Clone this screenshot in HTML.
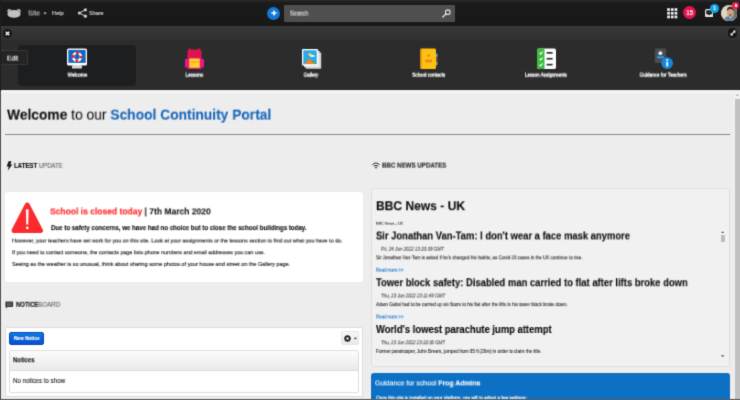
<!DOCTYPE html>
<html lang="en">
<head>
<meta charset="utf-8">
<title>School Continuity Portal</title>
<style>
*{box-sizing:border-box;margin:0;padding:0}
html,body{width:740px;height:400px;overflow:hidden;background:#ededed;font-family:"Liberation Sans",sans-serif;color:#111}
.abs{position:absolute}
.x{position:absolute;white-space:nowrap;line-height:1}
#page{position:relative;width:740px;height:400px;overflow:hidden;background:#ededed;filter:url(#softblur)}
/* top bar */
#topbar{left:0;top:0;width:740px;height:25.8px;background:linear-gradient(#2a2a2a 0,#1b1b1b 3px,#181818 100%)}
#topbar .t{color:#cfcfcf;font-size:6.6px;top:9px;line-height:8px;white-space:nowrap}
#search{left:283.6px;top:4.8px;width:171.4px;height:16.9px;background:#4f4f4f;border-radius:1.2px}
#plus{left:266.9px;top:6.5px;width:13.2px;height:13.2px;border-radius:50%;background:#1278d8}
/* second bar */
#bar2{left:0;top:25.8px;width:740px;height:14.4px;background:linear-gradient(#393939,#303030)}
#nav{left:0;top:40.2px;width:740px;height:50.3px;background:#2c2c2c}
#sel{left:18px;top:45px;width:118px;height:41px;border-radius:4px;background:#1c1e20}
.lbl{color:#fff;font-size:4.67px;font-weight:normal;-webkit-text-stroke:0.12px #fff;line-height:6px;top:72px;width:120px;text-align:center;white-space:nowrap}
#edit{left:0;top:49.5px;width:28px;height:15px;background:#242424;border:1px solid #383838;border-left:0;border-radius:0 2.5px 2.5px 0}
/* content */
#content{left:0;top:90.5px;width:734px;height:309.5px;background:linear-gradient(#f6f6f6 0,#ededed 4px,#ededed 100%)}
#leftedge{left:0;top:91px;width:1.2px;height:309px;background:#505050}
#sb{left:734px;top:91px;width:6px;height:309px;background:#f1f1f1}
#sbt{left:735.3px;top:98.7px;width:4.3px;height:302px;background:#c1c1c1}
h1{position:absolute;left:6.5px;top:106.2px;font-size:13.9px;line-height:18px;font-weight:normal;white-space:nowrap;color:#111}
h1 b{font-weight:bold}
h1 .bl{color:#1766b8;font-weight:bold}
#hr{left:5px;top:134px;width:725px;height:1px;background:#8a8a8a}
.sect{font-size:5.6px;line-height:8px;white-space:nowrap;color:#111}
.sect b{font-weight:bold}
.sect span{color:#777}

.card{background:#fff;border-radius:3px}
.t1{position:absolute;white-space:nowrap;line-height:1}
#alert{left:5px;top:192px;width:358px;height:90.4px}
#nb{left:5px;top:327px;width:357.8px;height:69.8px;border:1px solid #dcdcdc;border-radius:2px}
#newbtn{left:8.5px;top:332px;width:35.8px;height:12.6px;border-radius:2px;background:linear-gradient(#0a7be0,#0a4fd0);border:0.5px solid #0a45b8;color:#fff;font-weight:bold;font-size:4.73px;line-height:12.5px;text-align:center}
#gear{left:341.3px;top:331.4px;width:17.6px;height:13.2px;border-radius:2px;background:linear-gradient(#f7f7f7,#e9e9e9);border:1px solid #e6e6e6}
#tbl{left:9px;top:349.5px;width:350px;height:43.3px;border:1px solid #dedede;border-radius:2px;background:#fff}
#tblh{left:10px;top:350.5px;width:348px;height:20.5px;background:linear-gradient(#fcfcfc,#e9e9e9);border-bottom:1px solid #dcdcdc}
#news{left:370.5px;top:188px;width:359px;height:178.5px;background:#f1f1f1;border:1px solid #dfdfdf;border-radius:2px}
#blue{left:370.5px;top:372.5px;width:359px;height:40px;background:#0c70c4;border-radius:3px}
#bottomline{left:0;top:398.9px;width:740px;height:2px;background:#5c5c5c}
.hl{font-weight:bold;font-size:9.43px;color:#111}
.dt{font-style:italic;font-size:4.5px;color:#555}
.ds{font-size:4.5px;color:#333}
.rm{font-size:4.3px;color:#1a6fc4}
</style>
</head>
<body>
<svg width="0" height="0" style="position:absolute"><filter id="softblur" x="0" y="0" width="100%" height="100%" color-interpolation-filters="sRGB"><feConvolveMatrix order="3" kernelMatrix="0.0169 0.0962 0.0169 0.0962 0.5476 0.0962 0.0169 0.0962 0.0169" edgeMode="duplicate" preserveAlpha="true"/></filter></svg>
<div id="page">
  <div id="topbar" class="abs">
  </div>
  <div id="plus" class="abs"></div>
  <div id="search" class="abs"></div>
  <div id="bar2" class="abs"></div>

  <!-- top bar icons -->
  <svg class="abs" style="left:6px;top:7px" width="16" height="12" viewBox="0 0 16 12"><g fill="#c2c2c2"><ellipse cx="8" cy="6.9" rx="6.6" ry="3.9"/><circle cx="3.3" cy="3.9" r="2"/><circle cx="12.7" cy="3.9" r="2"/></g><circle cx="3.4" cy="3.8" r="0.6" fill="#555"/><circle cx="12.6" cy="3.8" r="0.6" fill="#555"/></svg>
  <svg class="abs" style="left:43px;top:12px" width="4" height="3" viewBox="0 0 4 3"><path d="M0.3 0.4H3.7L2 2.4Z" fill="#c8c8c8"/></svg>
  <svg class="abs" style="left:76.5px;top:7.5px" width="11" height="10" viewBox="0 0 11 10"><g stroke="#d0d0d0" stroke-width="1" fill="none"><path d="M8.3 1.8L2.4 5L8.3 8.2"/></g><g fill="#d0d0d0"><circle cx="2.4" cy="5" r="1.6"/><circle cx="8.4" cy="1.8" r="1.6"/><circle cx="8.4" cy="8.2" r="1.6"/></g></svg>
  <svg class="abs" style="left:270.5px;top:10.1px" width="6" height="6" viewBox="0 0 6 6"><path d="M3 0.4V5.6M0.4 3H5.6" stroke="#fff" stroke-width="1.5" fill="none"/></svg>
  <svg class="abs" style="left:441px;top:8px" width="11" height="11" viewBox="0 0 11 11"><circle cx="6.8" cy="4.2" r="2.3" fill="none" stroke="#e0e0e0" stroke-width="1.1"/><path d="M5 6L1.8 9" stroke="#e0e0e0" stroke-width="1.4" stroke-linecap="round"/></svg>
  <svg class="abs" style="left:666.5px;top:7.8px" width="11" height="11" viewBox="0 0 11 11"><g fill="#f2f2f2"><rect x="0.2" y="0.2" width="2.7" height="2.7"/><rect x="3.9" y="0.2" width="2.7" height="2.7"/><rect x="7.6" y="0.2" width="2.7" height="2.7"/><rect x="0.2" y="3.9" width="2.7" height="2.7"/><rect x="3.9" y="3.9" width="2.7" height="2.7"/><rect x="7.6" y="3.9" width="2.7" height="2.7"/><rect x="0.2" y="7.6" width="2.7" height="2.7"/><rect x="3.9" y="7.6" width="2.7" height="2.7"/><rect x="7.6" y="7.6" width="2.7" height="2.7"/></g></svg>
  <div class="abs" style="left:682.9px;top:5.9px;width:13.6px;height:13.6px;border-radius:50%;background:#e3134f;color:#fff;font-weight:bold;"></div>
  <svg class="abs" style="left:704.8px;top:9.1px" width="8.3" height="8.3" viewBox="0 0 9 9"><rect x="0.7" y="0.7" width="7.6" height="7.6" rx="0.8" fill="#222" stroke="#e4e4e4" stroke-width="1.3"/><path d="M0.7 5.6H3L3.6 6.6H5.4L6 5.6H8.3V8.3H0.7Z" fill="#e4e4e4"/></svg>
  <div class="abs" style="left:709.8px;top:3.5px;width:9.2px;height:9.2px;border-radius:50%;background:#15a4e6;color:#fff;font-weight:bold;"></div>
  <svg class="abs" style="left:721px;top:4.7px" width="16.4" height="16.4" viewBox="0 0 16.4 16.4"><defs><clipPath id="av"><circle cx="8.2" cy="8.2" r="7.9"/></clipPath></defs><circle cx="8.2" cy="8.2" r="8.2" fill="#cfc9bb"/><g clip-path="url(#av)"><rect width="16.4" height="16.4" fill="#cdc5ad"/><rect x="0" y="0" width="5.5" height="16.4" fill="#dcd6c4"/><rect x="12.5" y="0" width="4" height="16.4" fill="#6b705c"/><path d="M2.4 16.4Q3.4 11 9.4 10.8Q15 11 15.8 16.4Z" fill="#6a7f9b"/><path d="M8.2 11.4L9.4 13.6L10.8 11.4Z" fill="#e8e8e8"/><ellipse cx="9.4" cy="6.9" rx="3.1" ry="3.9" fill="#d3a083"/><path d="M6 6.2Q5.8 1.6 9.5 1.7Q13 1.8 12.8 6.2Q11.4 3.9 9.4 4.1Q7.2 3.9 6 6.2Z" fill="#35261f"/><path d="M7.6 8.8Q9.4 10.6 11.2 8.8Q10.8 11 9.4 11Q8 11 7.6 8.8Z" fill="#6b4a3a"/></g></svg>
  <div class="abs" style="left:732.2px;top:2.1px;width:6.6px;height:6.6px;border-radius:50%;background:#ea1f50"></div>
  <div class="abs" style="left:734.5px;top:3.6px;width:2px;height:3.4px;border-radius:1px;background:#fff"></div>
  <!-- bar2 buttons -->
  <div class="abs" style="left:2.8px;top:28.7px;width:9.4px;height:9.4px;border-radius:50%;background:#151515"></div>
  <svg class="abs" style="left:5px;top:30.9px" width="5" height="5" viewBox="0 0 5 5"><path d="M0.7 0.7L4.3 4.3M4.3 0.7L0.7 4.3" stroke="#fff" stroke-width="1.3"/></svg>
  <div class="abs" style="left:728.2px;top:28.4px;width:9.2px;height:9.2px;border-radius:50%;background:#141414"></div>
  <svg class="abs" style="left:729.8px;top:30px" width="6" height="6" viewBox="0 0 6 6"><path d="M1.2 4.8L4.8 1.2" stroke="#fff" stroke-width="1.2"/><path d="M2.8 0.6H5.4V3.2ZM0.6 2.8V5.4H3.2Z" fill="#fff"/></svg>

  <div id="nav" class="abs"></div>
  <div id="sel" class="abs"></div>

  <!-- nav icons -->
  <svg class="abs" style="left:66px;top:48px" width="22" height="22" viewBox="0 0 22 22"><rect x="6" y="17.5" width="10" height="3" rx="0.6" fill="#d6d9dc"/><rect x="7.5" y="16.5" width="7" height="2" fill="#c4c8cc"/><rect x="1" y="0.5" width="20" height="17" rx="1.6" fill="#fdfdfd"/><rect x="2.3" y="1.9" width="17.4" height="13" fill="#1565c0"/><circle cx="11" cy="8.8" r="3.95" fill="none" stroke="#fff" stroke-width="2.4"/><circle cx="11" cy="8.8" r="3.95" fill="none" stroke="#e5202a" stroke-width="2.4" stroke-dasharray="3.102 3.102" stroke-dashoffset="1.55"/></svg>
  <svg class="abs" style="left:184px;top:48px" width="21" height="22" viewBox="0 0 21 22"><rect x="4.6" y="0.3" width="2" height="3" rx="0.8" fill="#e0104f"/><rect x="14.4" y="0.3" width="2" height="3" rx="0.8" fill="#e0104f"/><path d="M3.5 3.4Q3.5 1.6 5.3 1.6H15.7Q17.5 1.6 17.5 3.4V10.5H3.5Z" fill="#dc1450"/><rect x="3.5" y="9.6" width="14" height="11.4" rx="1" fill="#f21289"/><rect x="1" y="11" width="3.5" height="8.5" rx="0.8" fill="#f21289"/><rect x="16.5" y="11" width="3.5" height="8.5" rx="0.8" fill="#f21289"/><rect x="5.2" y="10.4" width="10.6" height="9.3" rx="0.6" fill="#fdd12a"/><rect x="5.2" y="13.2" width="10.6" height="1.3" fill="#f9a61e"/></svg>
  <svg class="abs" style="left:301px;top:48px" width="21" height="22" viewBox="0 0 21 22"><rect x="4.6" y="4.4" width="15.6" height="16.4" rx="0.8" fill="#cfd3d6"/><rect x="3" y="2.8" width="15.6" height="16.4" rx="0.8" fill="#e6e8ea"/><rect x="1" y="1" width="16" height="16.6" rx="0.8" fill="#fcfcfc"/><rect x="2.3" y="2.3" width="13.4" height="13.8" fill="#29a9ea"/><circle cx="9" cy="6.6" r="1.6" fill="#fdd835"/><ellipse cx="11.5" cy="8" rx="2.3" ry="1.1" fill="#fff"/><path d="M9 16.1L12.3 12.4L15.7 15.4V16.1Z" fill="#4caf50"/><path d="M3.2 16.1L8.5 10.4L13.2 16.1Z" fill="#f6821f"/></svg>
  <svg class="abs" style="left:419px;top:48px" width="20" height="22" viewBox="0 0 20 22"><rect x="15.5" y="5.4" width="3" height="3.8" rx="0.7" fill="#26c6da"/><rect x="15.5" y="9.4" width="3" height="3.8" rx="0.7" fill="#e91e63"/><rect x="15.5" y="13.4" width="3" height="3.8" rx="0.7" fill="#7cc242"/><rect x="1.5" y="0.5" width="15.5" height="20.5" rx="1.5" fill="#fdc20f"/><rect x="1.5" y="0.5" width="1.8" height="20.5" rx="0.9" fill="#f6a019"/><circle cx="9.6" cy="7.6" r="1.4" fill="#f5821f"/><rect x="6.2" y="11.4" width="6.8" height="3" rx="0.6" fill="#f5821f"/></svg>
  <svg class="abs" style="left:536px;top:48px" width="21" height="22" viewBox="0 0 21 22"><rect x="1" y="0.5" width="19" height="20.5" rx="1.8" fill="#fdfdfd"/><path d="M2.8 0.5H8.5V21H2.8Q1 21 1 19.2V2.3Q1 0.5 2.8 0.5Z" fill="#3dbb3d"/><g stroke="#fff" stroke-width="1.1" fill="none"><path d="M3.4 4.9L4.6 6.1L6.6 3.7"/><path d="M3.4 10.8L4.6 12L6.6 9.6"/><path d="M3.4 16.7L4.6 17.9L6.6 15.5"/></g><g fill="#2f2f2f"><rect x="10.6" y="4" width="6" height="1.7"/><rect x="10.6" y="9.9" width="6" height="1.7"/><rect x="10.6" y="15.8" width="6" height="1.7"/></g></svg>
  <svg class="abs" style="left:654px;top:48px" width="20" height="22" viewBox="0 0 20 22"><rect x="0.9" y="0.5" width="11.3" height="14.5" rx="1.2" fill="#4b4d52"/><circle cx="6.4" cy="5.2" r="1.9" fill="#f0f0f0"/><rect x="3" y="8.1" width="7" height="2.3" fill="#1e9be6"/><circle cx="13.2" cy="15.1" r="5.8" fill="#1587dc"/><circle cx="13.2" cy="12" r="1" fill="#fff"/><rect x="12.3" y="13.8" width="1.8" height="4.6" fill="#fff"/></svg>
  <div id="edit" class="abs"></div>

  <div id="content" class="abs"></div>
  <div id="leftedge" class="abs"></div>
  <div id="sb" class="abs"></div>
  <div id="sbt" class="abs"></div>

  <div id="hr" class="abs"></div>

  <svg class="abs" style="left:6px;top:160.5px" width="7" height="10" viewBox="0 0 7 10"><path d="M2.6 0.3H5.6L4.3 3.5H6.4L1.6 9.8L2.7 5.4H0.6Z" fill="#1a1a1a"/></svg>
  <svg class="abs" style="left:371.7px;top:162.2px" width="8" height="6.8" viewBox="0 0 9 7.5" preserveAspectRatio="none"><g fill="none" stroke="#2a2a2a" stroke-width="1.1" stroke-linecap="round"><path d="M0.7 2.7Q4.5 -0.7 8.3 2.7"/><path d="M2.3 4.4Q4.5 2.5 6.7 4.4"/></g><circle cx="4.5" cy="6.1" r="0.95" fill="#2a2a2a"/></svg>
  <svg class="abs" style="left:5px;top:301px" width="8.5" height="8" viewBox="0 0 8.5 8"><path d="M1.2 0.4H7.3Q8.1 0.4 8.1 1.2V5.2Q8.1 6 7.3 6H2.6L0.9 7.5V6Q0.4 5.8 0.4 5.2V1.2Q0.4 0.4 1.2 0.4Z" fill="#333"/><path d="M1.8 2H6.8M1.8 3.3H6.8M1.8 4.6H6.8" stroke="#9a9a9a" stroke-width="0.5"/></svg>
  <!-- alert card -->
  <div id="alert" class="abs card"></div>
  <svg class="abs" style="left:10.3px;top:201.2px" width="35" height="33" viewBox="0 0 35 33"><path d="M17.25 3.9L30.6 29.7H3.9Z" fill="#fb2a2c" stroke="#fb2a2c" stroke-width="4.8" stroke-linejoin="round"/><path d="M15.85 8.6Q17.25 7.8 18.65 8.6L18.2 23.4H16.3Z" fill="#fff"/><circle cx="17.25" cy="26.9" r="1.35" fill="#fff"/></svg>

  <!-- noticeboard -->
  <div id="nb" class="abs card"></div>
  <div id="newbtn" class="abs"></div>
  <div id="gear" class="abs"></div>
  <svg class="abs" style="left:343.8px;top:334.6px" width="14" height="7" viewBox="0 0 14 7"><circle cx="3.5" cy="3.5" r="2.15" fill="none" stroke="#1c1c1c" stroke-width="1.7"/><g stroke="#1c1c1c" stroke-width="1.1"><path d="M3.5 0V1M3.5 6V7M0 3.5H1M6 3.5H7M1 1L1.7 1.7M5.3 5.3L6 6M1 6L1.7 5.3M5.3 1.7L6 1"/></g><path d="M10 2.8H12.8L11.4 4.4Z" fill="#1c1c1c"/></svg>
  <div id="tbl" class="abs"></div>
  <div id="tblh" class="abs"></div>

  <!-- news -->
  <div id="news" class="abs"></div>
  <div class="abs" style="left:720.6px;top:235px;width:4px;height:7px;background:#bdbdbd"></div>

  <!-- blue card -->
  <div id="blue" class="abs"></div>
  <svg class="abs" style="left:721px;top:230.5px" width="3.4" height="2.4" viewBox="0 0 3.4 2.4"><path d="M0 2.2L1.7 0.2L3.4 2.2Z" fill="#555"/></svg>
  <svg class="abs" style="left:721px;top:355px" width="3.4" height="2.4" viewBox="0 0 3.4 2.4"><path d="M0 0.2L1.7 2.2L3.4 0.2Z" fill="#555"/></svg>
  <svg class="abs" style="left:736px;top:94px" width="2.6" height="2" viewBox="0 0 3.4 2.4"><path d="M0 2.2L1.7 0.2L3.4 2.2Z" fill="#8a8a8a"/></svg>
  <div class="abs" style="left:0;top:0;width:1px;height:91px;background:#1e1e1e"></div>
  <div class="x" style="left:27.60px;top:9px;font-size:7.4px;color:#c4c4c4;transform:translateY(0.50px) scaleX(0.9647);transform-origin:0 0;will-change:transform;-webkit-text-stroke:0.12px #c4c4c4;">Site</div>
  <div class="x" style="left:52.30px;top:10px;font-size:6.2px;color:#d2d2d2;transform:translateY(0.00px) scaleX(0.9109);transform-origin:0 0;will-change:transform;-webkit-text-stroke:0.15px #d2d2d2;">Help</div>
  <div class="x" style="left:89.00px;top:10px;font-size:6.2px;color:#d2d2d2;transform:translateY(0.00px) scaleX(0.8901);transform-origin:0 0;will-change:transform;-webkit-text-stroke:0.15px #d2d2d2;">Share</div>
  <div class="x" style="left:289.80px;top:10px;font-size:6.3px;color:#e8e8e8;transform:translateY(0.60px) scaleX(0.9121);transform-origin:0 0;will-change:transform;-webkit-text-stroke:0.12px #e8e8e8;">Search</div>
  <div class="x" style="left:686.03px;top:10px;font-size:6.6px;color:#fff;transform:translateY(0.10px) scaleX(0.8987);transform-origin:50% 0;will-change:transform;"><b>15</b></div>
  <div class="x" style="left:712.74px;top:6px;font-size:5.6px;color:#fff;transform:translateY(0.10px) scaleX(1.0000);transform-origin:50% 0;will-change:transform;"><b>1</b></div>
  <div class="x" style="left:66.62px;top:72px;font-size:5.0px;color:#fff;transform:translateY(0.60px) scaleX(0.9398);transform-origin:50% 0;will-change:transform;-webkit-text-stroke:0.28px #fff;">Welcome</div>
  <div class="x" style="left:184.99px;top:72px;font-size:5.0px;color:#fff;transform:translateY(0.60px) scaleX(0.9450);transform-origin:50% 0;will-change:transform;-webkit-text-stroke:0.28px #fff;">Lessons</div>
  <div class="x" style="left:303.48px;top:72px;font-size:5.0px;color:#fff;transform:translateY(0.60px) scaleX(0.9215);transform-origin:50% 0;will-change:transform;-webkit-text-stroke:0.28px #fff;">Gallery</div>
  <div class="x" style="left:411.34px;top:72px;font-size:5.0px;color:#fff;transform:translateY(0.60px) scaleX(0.9345);transform-origin:50% 0;will-change:transform;-webkit-text-stroke:0.28px #fff;">School contacts</div>
  <div class="x" style="left:523.37px;top:72px;font-size:5.0px;color:#fff;transform:translateY(0.60px) scaleX(0.9158);transform-origin:50% 0;will-change:transform;-webkit-text-stroke:0.28px #fff;">Lesson Assignments</div>
  <div class="x" style="left:638.39px;top:72px;font-size:5.0px;color:#fff;transform:translateY(0.60px) scaleX(0.9359);transform-origin:50% 0;will-change:transform;-webkit-text-stroke:0.28px #fff;">Guidance for Teachers</div>
  <div class="x" style="left:7.40px;top:55px;font-size:6.8px;color:#fff;transform:translateY(0.60px) scaleX(0.9557);transform-origin:0 0;will-change:transform;-webkit-text-stroke:0.12px #fff;">Edit</div>
  <div class="x" style="left:6.60px;top:107px;font-size:14.8px;color:#0e0e0e;transform:translateY(0.60px) scaleX(0.9326);transform-origin:0 0;will-change:transform;-webkit-text-stroke:0.1px;"><b>Welcome</b> to our <b style="color:#1766b8">School Continuity Portal</b></div>
  <div class="x" style="left:14.00px;top:162px;font-size:6.7px;color:#080808;transform:translateY(0.90px) scaleX(0.9053);transform-origin:0 0;will-change:transform;-webkit-text-stroke:0.1px #080808;"><b>LATEST</b></div>
  <div class="x" style="left:39.30px;top:162px;font-size:6.7px;color:#5c5c5c;transform:translateY(0.90px) scaleX(0.8859);transform-origin:0 0;will-change:transform;-webkit-text-stroke:0.08px #5c5c5c;">UPDATE</div>
  <div class="x" style="left:382.00px;top:162px;font-size:6.6px;color:#262626;transform:translateY(0.60px) scaleX(0.9353);transform-origin:0 0;will-change:transform;-webkit-text-stroke:0.1px #262626;"><b>BBC NEWS UPDATES</b></div>
  <div class="x" style="left:15.60px;top:301px;font-size:6.7px;color:#080808;transform:translateY(0.80px) scaleX(0.8787);transform-origin:0 0;will-change:transform;-webkit-text-stroke:0.1px #080808;"><b>NOTICE</b></div>
  <div class="x" style="left:38.20px;top:301px;font-size:6.7px;color:#5c5c5c;transform:translateY(0.80px) scaleX(0.9371);transform-origin:0 0;will-change:transform;-webkit-text-stroke:0.08px #5c5c5c;">BOARD</div>
  <div class="x" style="left:50.40px;top:207px;font-size:9.0px;color:#161616;transform:translateY(0.40px) scaleX(0.9454);transform-origin:0 0;will-change:transform;-webkit-text-stroke-width:0.14px;"><b><span style="color:#fd2226">School is closed today</span> | 7th March 2020</b></div>
  <div class="x" style="left:50.60px;top:225px;font-size:6.6px;color:#080808;transform:translateY(0.10px) scaleX(0.9339);transform-origin:0 0;will-change:transform;-webkit-text-stroke:0.1px #080808;"><b>Due to safety concerns, we have had no choice but to close the school buildings today.</b></div>
  <div class="x" style="left:12.00px;top:238px;font-size:5.7px;color:#2a2a2a;transform:translateY(0.50px) scaleX(0.9461);transform-origin:0 0;will-change:transform;-webkit-text-stroke:0.16px #2a2a2a;">However, your teachers have set work for you on this site. Look at your assignments or the lessons section to find out what you have to do.</div>
  <div class="x" style="left:12.00px;top:250px;font-size:5.7px;color:#2a2a2a;transform:translateY(0.20px) scaleX(0.9447);transform-origin:0 0;will-change:transform;-webkit-text-stroke:0.16px #2a2a2a;">If you need to contact someone, the contacts page lists phone numbers and email addresses you can use.</div>
  <div class="x" style="left:12.00px;top:261px;font-size:5.7px;color:#2a2a2a;transform:translateY(0.90px) scaleX(0.9505);transform-origin:0 0;will-change:transform;-webkit-text-stroke:0.16px #2a2a2a;">Seeing as the weather is so unusual, think about sharing some photos of your house and street on the Gallery page.</div>
  <div class="x" style="left:13.75px;top:336px;font-size:5.0px;color:#fff;transform:translateY(0.00px) scaleX(0.9461);transform-origin:0 0;will-change:transform;-webkit-text-stroke:0.1px #fff;"><b>New Notice</b></div>
  <div class="x" style="left:13.00px;top:357px;font-size:6.3px;color:#080808;transform:translateY(0.20px) scaleX(0.9451);transform-origin:0 0;will-change:transform;-webkit-text-stroke:0.08px #080808;"><b>Notices</b></div>
  <div class="x" style="left:13.00px;top:378px;font-size:6.3px;color:#222;transform:translateY(0.00px) scaleX(0.9774);transform-origin:0 0;will-change:transform;-webkit-text-stroke:0.1px #222;">No notices to show</div>
  <div class="x" style="left:375.50px;top:199px;font-size:13.2px;color:#0c0c0c;transform:translateY(0.20px) scaleX(0.9133);transform-origin:0 0;will-change:transform;-webkit-text-stroke:0.12px #0c0c0c;"><b>BBC News - UK</b></div>
  <div class="x" style="left:375.50px;top:221px;font-size:4.0px;color:#444;transform:translateY(0.70px) scaleX(0.9489);transform-origin:0 0;will-change:transform;-webkit-text-stroke:0.1px #444;">BBC News - UK</div>
  <div class="x" style="left:375.50px;top:231px;font-size:10.3px;color:#0c0c0c;transform:translateY(0.40px) scaleX(0.9153);transform-origin:0 0;will-change:transform;-webkit-text-stroke:0.12px #0c0c0c;"><b>Sir Jonathan Van-Tam: I don't wear a face mask anymore</b></div>
  <div class="x" style="left:380.80px;top:246px;font-size:5.1px;color:#444;font-style:italic;transform:translateY(0.70px) scaleX(0.8870);transform-origin:0 0;will-change:transform;-webkit-text-stroke:0.1px #444;">Fri, 24 Jun 2022 13:20:39 GMT</div>
  <div class="x" style="left:375.50px;top:256px;font-size:4.9px;color:#333;transform:translateY(0.30px) scaleX(0.9228);transform-origin:0 0;will-change:transform;-webkit-text-stroke:0.12px #333;">Sir Jonathan Van-Tam is asked if he's changed his habits, as Covid-19 cases in the UK continue to rise.</div>
  <div class="x" style="left:375.50px;top:267px;font-size:5.0px;color:#1f78d2;transform:translateY(0.70px) scaleX(0.8633);transform-origin:0 0;will-change:transform;-webkit-text-stroke:0.12px #1f78d2;">Read more &gt;&gt;</div>
  <div class="x" style="left:375.50px;top:278px;font-size:10.3px;color:#0c0c0c;transform:translateY(0.20px) scaleX(0.9160);transform-origin:0 0;will-change:transform;-webkit-text-stroke:0.12px #0c0c0c;"><b>Tower block safety: Disabled man carried to flat after lifts broke down</b></div>
  <div class="x" style="left:380.80px;top:293px;font-size:5.1px;color:#444;font-style:italic;transform:translateY(0.50px) scaleX(0.8737);transform-origin:0 0;will-change:transform;-webkit-text-stroke:0.1px #444;">Thu, 23 Jun 2022 23:11:48 GMT</div>
  <div class="x" style="left:375.50px;top:303px;font-size:4.9px;color:#333;transform:translateY(0.10px) scaleX(0.9196);transform-origin:0 0;will-change:transform;-webkit-text-stroke:0.12px #333;">Adam Gabsi had to be carried up six floors to his flat after the lifts in his tower block broke down.</div>
  <div class="x" style="left:375.50px;top:314px;font-size:5.0px;color:#1f78d2;transform:translateY(0.50px) scaleX(0.8633);transform-origin:0 0;will-change:transform;-webkit-text-stroke:0.12px #1f78d2;">Read more &gt;&gt;</div>
  <div class="x" style="left:375.50px;top:325px;font-size:10.3px;color:#0c0c0c;transform:translateY(0.00px) scaleX(0.9163);transform-origin:0 0;will-change:transform;-webkit-text-stroke:0.12px #0c0c0c;"><b>World's lowest parachute jump attempt</b></div>
  <div class="x" style="left:380.80px;top:340px;font-size:5.1px;color:#444;font-style:italic;transform:translateY(0.30px) scaleX(0.8693);transform-origin:0 0;will-change:transform;-webkit-text-stroke:0.1px #444;">Thu, 23 Jun 2022 23:10:36 GMT</div>
  <div class="x" style="left:375.50px;top:349px;font-size:4.9px;color:#333;transform:translateY(0.90px) scaleX(0.9156);transform-origin:0 0;will-change:transform;-webkit-text-stroke:0.12px #333;">Former paratrooper, John Bream, jumped from 85 ft (26m) in order to claim the title.</div>
  <div class="x" style="left:375.00px;top:379px;font-size:7.3px;color:#fff;transform:translateY(0.40px) scaleX(0.9447);transform-origin:0 0;will-change:transform;-webkit-text-stroke:0.12px #fff;">Guidance for school <b>Frog Admins</b></div>
  <div class="x" style="left:375.50px;top:396px;font-size:4.9px;color:#fff;transform:translateY(0.60px) scaleX(0.9304);transform-origin:0 0;will-change:transform;-webkit-text-stroke:0.15px #fff;">Once this site is installed on your platform, you will to adjust a few settings:</div>
  <div id="bottomline" class="abs"></div>
</div>
</body>
</html>
